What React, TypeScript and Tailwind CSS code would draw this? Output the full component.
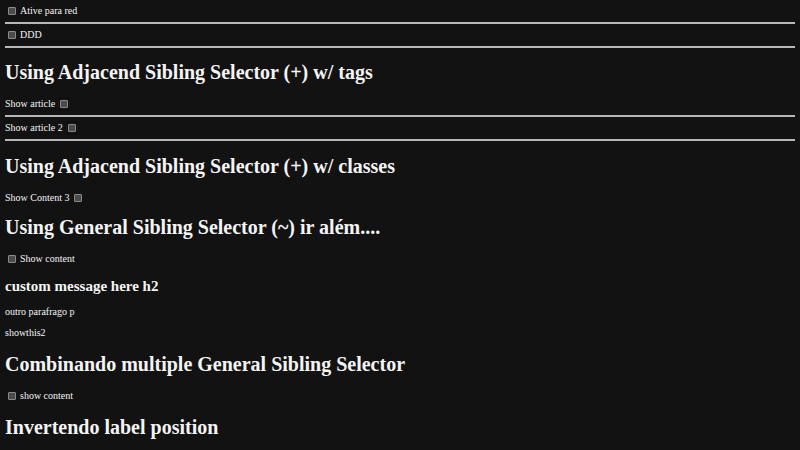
import React from 'react'

const Box = ({ className = 'mx-[3px]' }: { className?: string }) => (
  <span
    className={`inline-block w-[8px] h-[8px] align-[-1px] rounded-[1px] border border-[#8a8a8a] bg-[#4b4b4b] ${className}`}
  />
)

const Rule = () => <div className="h-[2px] bg-[#b9b9b9] my-[5px]" />

const Line = ({ children }: { children: React.ReactNode }) => (
  <div className="h-[12px] leading-[12px] flex items-center">{children}</div>
)

const H1 = ({ children, className = 'mt-[13px] mb-[14px]' }: { children: React.ReactNode; className?: string }) => (
  <h1 className={`text-[20px] leading-[23px] font-bold ${className}`}>{children}</h1>
)

export default function App() {
  return (
    <div className="min-h-screen h-[450px] overflow-hidden bg-[#121212] text-[#f4f4f4] font-['Liberation_Serif',serif] text-[10px] p-[5px]">
      <Line>
        <Box />
        <span className="ml-[1px]">Ative para red</span>
      </Line>
      <Rule />
      <Line>
        <Box />
        <span className="ml-[1px]">DDD</span>
      </Line>
      <Rule />

      <H1>Using Adjacend Sibling Selector (+) w/ tags</H1>
      <Line>
        <span>Show article</span>
        <Box className="ml-[5px]" />
      </Line>
      <Rule />
      <Line>
        <span>Show article 2</span>
        <Box className="ml-[5px]" />
      </Line>
      <Rule />

      <H1 className="mt-[14px] mb-[14px]">Using Adjacend Sibling Selector (+) w/ classes</H1>
      <Line>
        <span>Show Content 3</span>
        <Box className="ml-[5px]" />
      </Line>

      <H1 className="mt-[12px] mb-[14px]">Using General Sibling Selector (~) ir além....</H1>
      <Line>
        <Box />
        <span className="ml-[1px]">Show content</span>
      </Line>
      <h2 className="text-[15px] leading-[17px] font-bold mt-[13px] mb-[11px]">custom message here h2</h2>
      <p className="leading-[12px]">outro parafrago p</p>
      <p className="leading-[12px] mt-[9px]">showthis2</p>

      <H1 className="mt-[14px] mb-[14px]">Combinando multiple General Sibling Selector</H1>
      <Line>
        <Box />
        <span className="ml-[1px]">show content</span>
      </Line>

      <H1 className="mt-[14px] mb-[14px]">Invertendo label position</H1>
    </div>
  )
}
